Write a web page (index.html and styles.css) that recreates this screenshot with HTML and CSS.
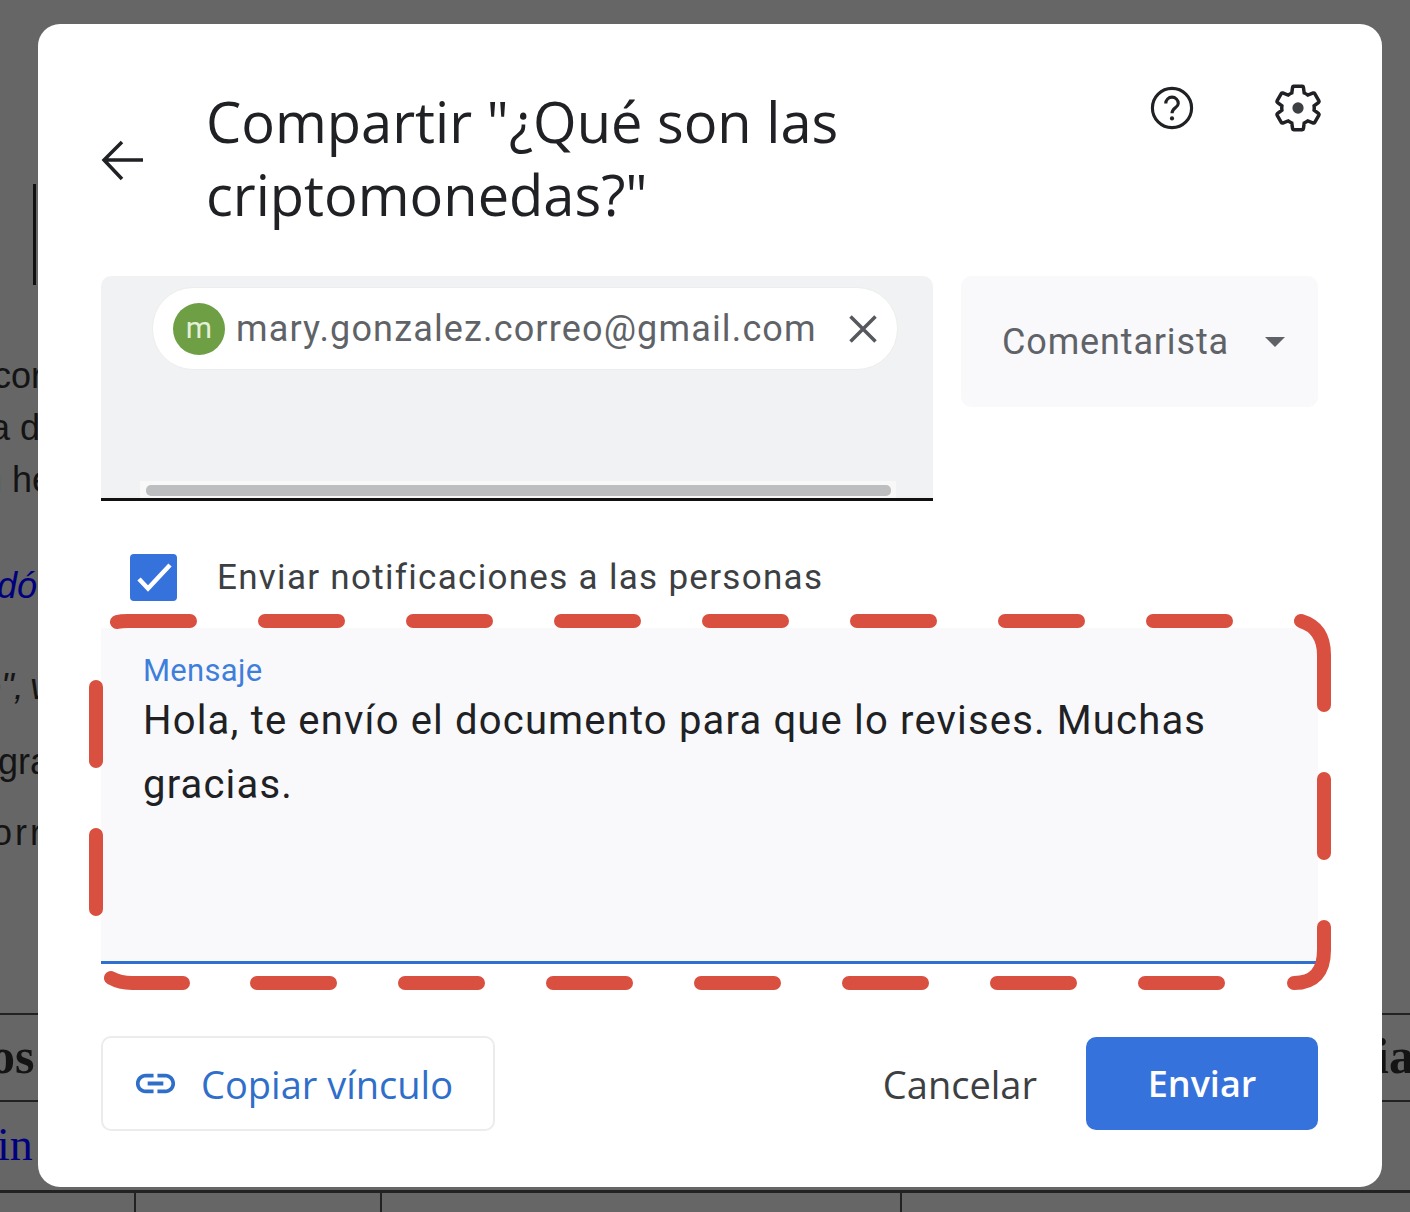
FILE: index.html
```html
<!DOCTYPE html>
<html lang="es">
<head>
  <meta charset="UTF-8" />
  <title>Compartir</title>
  <link rel="stylesheet" href="styles.css">
</head>
<body>
  <div class="doc">
    <div class="doc-bar"></div>
    <div class="doc-para">
      <p class="line-con">cor</p>
      <p class="line-ade">a d</p>
      <p class="line-he">n he</p>
    </div>
    <p class="doc-link">dó</p>
    <p class="doc-quote">o", v</p>
    <p class="line-gra">gra</p>
    <p class="line-orr">orr</p>
    <div class="doc-table">
      <div class="doc-row doc-head"><b class="cell-left">os</b><b class="cell-right">ia</b></div>
      <div class="doc-row doc-body"><span>in</span></div>
      <div class="doc-row doc-cols"><i></i><i></i><i></i><i></i></div>
    </div>
  </div>

  <section class="dialog">
    <header class="dialog-head">
      <svg class="back-icon" viewBox="0 0 44 44" width="44" height="44"><path d="M42 20H4M21 2 3 20l18 19" /></svg>
      <h1 class="dialog-title">Compartir "¿Qué son las<br>criptomonedas?"</h1>
      <div class="head-icons">
        <svg class="help-icon" viewBox="0 0 24 24" width="50" height="50"><circle cx="12" cy="12" r="9.4" /><path d="M9 9.800a3 3 0 0 1 6 0c0 2.100-3 2.200-3 4.700" /><circle class="dot" cx="12" cy="17" r="1" /></svg>
        <svg class="gear-icon" viewBox="0 0 24 24" width="52" height="52"><path d="M19.430 12.980c.04-.32.07-.64.07-.98 0-.34-.03-.66-.07-.98l2.110-1.650c.19-.15.24-.42.12-.64l-2-3.460c-.09-.16-.26-.25-.44-.25-.06 0-.12.01-.17.03l-2.490 1c-.52-.4-1.080-.73-1.690-.98l-.38-2.650C14.460 2.180 14.250 2 14 2h-4c-.25 0-.46.18-.49.42l-.38 2.650c-.61.25-1.170.59-1.690.98l-2.490-1c-.06-.02-.12-.03-.18-.03-.17 0-.34.09-.43.25l-2 3.460c-.13.22-.07.49.12.64l2.110 1.650c-.04.32-.07.65-.07.98 0 .33.03.66.07.98l-2.110 1.650c-.19.15-.24.42-.12.64l2 3.460c.09.16.26.25.44.25.06 0 .12-.01.17-.03l2.490-1c.52.4 1.080.73 1.690.98l.38 2.650c.03.24.24.42.49.42h4c.25 0 .46-.18.49-.42l.38-2.650c.61-.25 1.170-.59 1.690-.98l2.490 1c.06.02.12.03.18.03.17 0 .34-.09.43-.25l2-3.460c.12-.22.07-.49-.12-.64l-2.110-1.650z" /><circle class="dot" cx="12" cy="12" r="2.600" /></svg>
      </div>
    </header>

    <div class="share-row">
      <div class="recipients">
        <div class="chip">
          <span class="avatar">m</span>
          <span class="chip-mail">mary.gonzalez.correo@gmail.com</span>
          <svg class="chip-close" viewBox="0 0 28 28" width="28" height="28"><path d="M1.500 1.500l25 25M26.500 1.500l-25 25" /></svg>
        </div>
        <div class="scroll-track"><div class="scroll-thumb"></div></div>
      </div>
      <div class="role">
        <span>Comentarista</span>
        <span class="caret"></span>
      </div>
    </div>

    <label class="notify">
      <span class="checkbox"><svg viewBox="0 0 47 47" width="47" height="47"><path d="M9 25l9 9.500L40 11" /></svg></span>
      <span class="notify-text">Enviar notificaciones a las personas</span>
    </label>

    <div class="message">
      <div class="message-label">Mensaje</div>
      <div class="message-text">Hola, te envío el documento para que lo revises. Muchas gracias.</div>
      <svg class="dash-frame" viewBox="81 600 1260 400" width="1260" height="400">
        <path d="M117 622Q121 621 128 621H190M265 621H338M413 621H486M561 621H634M709 621H782M857 621H930M1005 621H1078M1153 621H1226" />
        <path d="M1301 621Q1324 628 1324 655V705M1324 779V853M1324 927V950Q1324 983 1294 983" />
        <path d="M1218 983H1145M1070 983H997M922 983H849M774 983H701M626 983H553M478 983H405M330 983H257M183 983H132Q120 983 111 978" />
        <path d="M96 909V835M96 761V687" />
      </svg>
    </div>

    <footer class="dialog-foot">
      <button class="copy-btn">
        <svg viewBox="0 0 24 24" width="47" height="47"><path d="M3.900 12c0-1.710 1.390-3.100 3.100-3.100h4V7H7c-2.760 0-5 2.240-5 5s2.240 5 5 5h4v-1.900H7c-1.710 0-3.100-1.390-3.100-3.100zM8 13h8v-2H8v2zm9-6h-4v1.900h4c1.710 0 3.100 1.390 3.100 3.100s-1.390 3.100-3.100 3.100h-4V17h4c2.760 0 5-2.240 5-5s-2.240-5-5-5z" /></svg>
        <span>Copiar vínculo</span>
      </button>
      <button class="cancel-btn">Cancelar</button>
      <button class="send-btn">Enviar</button>
    </footer>
  </section>
</body>
</html>
```

FILE: styles.css
```css
:root {
  --blue: #3572dc;
  --grey-text: #5f6368;
  --dark-text: #3c4043;
  --field-bg: #f9f9fb;
  --red: #d95040;
  --title-font: "Open Sans", Roboto, sans-serif;
}
* {
  box-sizing: border-box;
  margin: 0;
  padding: 0;
}
html,
body {
  height: 1212px;
  overflow: hidden;
}
body {
  position: relative;
  background-color: #666;
  font-family: Roboto, Arial, sans-serif;
}

/* dimmed document behind the dialog */
.doc {
  padding-top: 184px;
  color: #141414;
  font-family: "Liberation Sans", Arial, sans-serif;
  font-size: 36px;
  line-height: 52px;
  white-space: nowrap;
}
.doc-bar {
  width: 3px;
  height: 101px;
  margin-left: 33px;
  background-color: #111;
}
.doc-para {
  margin-top: 65px;
}
.line-con {
  margin-left: -7px;
}
.line-ade {
  margin-left: -10px;
}
.line-he {
  margin-left: -18px;
}
.doc-link {
  margin-top: 54px;
  margin-left: -3px;
  color: #00007f;
  font-style: italic;
}
.doc-quote {
  margin-top: 49px;
  margin-left: -19px;
  font-style: italic;
  word-spacing: -4px;
}
.line-gra {
  margin-top: 23px;
  margin-left: -2px;
}
.line-orr {
  margin-top: 19px;
  margin-left: -8px;
  letter-spacing: 3px;
}
.doc-table {
  margin-top: 154px;
  font-family: "Liberation Serif", "Times New Roman", serif;
  font-size: 46px;
}
.doc-row {
  border-top: 2px solid #222;
}
.doc-head {
  display: flex;
  justify-content: space-between;
  height: 87px;
  padding-top: 15px;
  font-size: 50px;
}
.cell-left {
  margin-left: -10px;
}
.cell-right {
  margin-right: -4px;
}
.doc-body {
  height: 90px;
  padding-top: 17px;
  color: #00007f;
}
.doc-body span {
  margin-left: -3px;
}
.doc-cols {
  display: grid;
  grid-template-columns: 136px 246px 520px 1fr;
  height: 22px;
  border-top-width: 3px;
}
.doc-cols i {
  border-right: 2px solid #222;
}
.doc-cols i:last-child {
  border-right: none;
}

/* share dialog */
.dialog {
  position: absolute;
  left: 38px;
  top: 24px;
  width: 1344px;
  height: 1163px;
  padding: 62px 64px 0 63px;
  background-color: #fff;
  border-radius: 22px;
}
.dialog-head {
  display: flex;
  align-items: center;
  height: 147px;
}
.back-icon {
  flex: none;
  margin-top: 4px;
  margin-right: 61px;
  fill: none;
  stroke: #202124;
  stroke-width: 3.5;
}
.dialog-title {
  flex: 1;
  margin-top: -4px;
  color: #202124;
  font-family: var(--title-font);
  font-size: 56px;
  font-weight: 400;
  line-height: 73px;
  white-space: nowrap;
}
.head-icons {
  display: flex;
  align-self: flex-start;
  align-items: center;
  gap: 75px;
  margin-top: -4px;
  margin-right: -6px;
}
.help-icon {
  fill: none;
  stroke: #202124;
  stroke-width: 1.5;
}
.help-icon .dot {
  fill: #202124;
  stroke: none;
}
.gear-icon {
  fill: none;
  stroke: #202124;
  stroke-width: 1.6;
}
.gear-icon .dot {
  fill: #3c4043;
  stroke: none;
}
.share-row {
  display: flex;
  align-items: flex-start;
  gap: 28px;
  margin-top: 43px;
}
.recipients {
  display: flex;
  flex-direction: column;
  width: 832px;
  height: 225px;
  padding: 11px 0 0 51px;
  background-color: #f1f2f4;
  border-bottom: 3px solid #111;
  border-radius: 10px 10px 0 0;
}
.chip {
  display: flex;
  align-items: center;
  width: 746px;
  height: 83px;
  padding: 0 20px;
  background-color: #fff;
  border: 1px solid #eceded;
  border-radius: 41px;
}
.avatar {
  flex: none;
  width: 52px;
  height: 52px;
  margin-right: 11px;
  background-color: #6f9f45;
  border-radius: 50%;
  color: #e4f0d8;
  font-size: 30px;
  line-height: 50px;
  text-align: center;
}
.chip-mail {
  color: var(--grey-text);
  font-size: 36px;
  letter-spacing: 1.15px;
  white-space: nowrap;
}
.chip-close {
  flex: none;
  margin-left: auto;
  fill: none;
  stroke: #55585c;
  stroke-width: 3.5;
}
.scroll-track {
  width: 756px;
  height: 17px;
  margin-top: auto;
  margin-left: -12px;
  padding: 4px 5px 2px 6px;
  background-color: #f8f8f9;
}
.scroll-thumb {
  height: 11px;
  background-color: #bdbebf;
  border-radius: 5px;
}
.role {
  display: flex;
  align-items: center;
  width: 357px;
  height: 131px;
  padding-left: 41px;
  background-color: var(--field-bg);
  border-radius: 10px;
  color: var(--grey-text);
  font-size: 36px;
  letter-spacing: 0.85px;
}
.caret {
  width: 0;
  height: 0;
  margin-left: 36px;
  border-top: 10px solid var(--grey-text);
  border-left: 10px solid transparent;
  border-right: 10px solid transparent;
}
.notify {
  display: flex;
  align-items: center;
  gap: 40px;
  margin-top: 53px;
  margin-left: 29px;
}
.checkbox {
  width: 47px;
  height: 47px;
  background-color: var(--blue);
  border-radius: 4px;
}
.checkbox svg {
  display: block;
  fill: none;
  stroke: #fff;
  stroke-width: 4.5;
}
.notify-text {
  color: var(--dark-text);
  font-size: 35px;
  letter-spacing: 1.3px;
}
.message {
  position: relative;
  height: 336px;
  margin-top: 27px;
  padding: 24px 42px 0;
  background-color: var(--field-bg);
  border-bottom: 3px solid #2f6fd0;
}
.message-label {
  color: #3f7fdc;
  font-size: 31px;
  line-height: 37px;
  letter-spacing: 0.3px;
}
.message-text {
  color: #202124;
  font-size: 40px;
  line-height: 64px;
  letter-spacing: 1.17px;
}
.dash-frame {
  position: absolute;
  left: -20px;
  top: -28px;
  fill: none;
  stroke: var(--red);
  stroke-width: 14;
  stroke-linecap: round;
}
.dialog-foot {
  display: flex;
  align-items: center;
  height: 95px;
  margin-top: 72px;
}
.dialog-foot button {
  background: none;
  border: none;
  font-family: var(--title-font);
  font-size: 38px;
}
.dialog-foot .copy-btn {
  display: flex;
  align-items: center;
  gap: 22px;
  width: 394px;
  height: 95px;
  margin-right: auto;
  padding-left: 29px;
  border: 2px solid #ececec;
  border-radius: 10px;
  color: #2f6fc9;
}
.copy-btn svg {
  fill: #2f6fc9;
}
.dialog-foot .cancel-btn {
  margin-right: 49px;
  color: var(--dark-text);
}
.dialog-foot .send-btn {
  width: 232px;
  height: 93px;
  background-color: var(--blue);
  border-radius: 10px;
  color: #fff;
  font-size: 36px;
  font-weight: 600;
}
```
